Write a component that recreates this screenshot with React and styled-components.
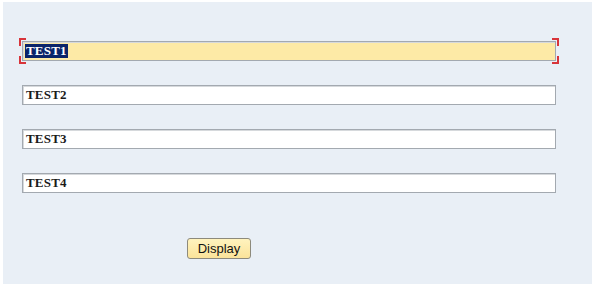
import React from 'react';
import styled, { createGlobalStyle } from 'styled-components';

const Global = createGlobalStyle`
  html, body {
    margin: 0;
    padding: 0;
    background: #ffffff;
  }
`;

const Page = styled.div`
  width: 595px;
  height: 288px;
  padding: 2px 3px 4px 3px;
  box-sizing: border-box;
  background: #ffffff;
`;

const Panel = styled.div`
  height: 100%;
  box-sizing: border-box;
  background: #e9eff6;
  padding: 39px 0 0 19px;
  display: flex;
  flex-direction: column;
`;

const Fields = styled.div`
  display: flex;
  flex-direction: column;
  gap: 24px;
`;

const FieldWrap = styled.div`
  position: relative;
  width: 534px;
`;

const Field = styled.div`
  height: 20px;
  box-sizing: border-box;
  border: 1px solid #a3a9b0;
  box-shadow: inset 1px 1px 0 #d6d9dc;
  background: ${(p) => (p.$focused ? '#fdeaa6' : '#ffffff')};
  display: flex;
  align-items: center;
  padding-left: 3px;
  font-family: "Liberation Serif", "DejaVu Serif", serif;
  font-weight: bold;
  font-size: 13px;
  letter-spacing: 0.2px;
  color: #1a1a1a;
`;

const Selected = styled.span`
  background: #0a246a;
  color: #ffffff;
  line-height: 14px;
  padding: 0 1px;
  margin-left: -1px;
`;

const Corner = styled.span`
  position: absolute;
  width: 5px;
  height: 6px;
  border-color: #d8343a;
  border-style: solid;
  border-width: 0;
  ${(p) => (p.$top ? 'top: -3px;' : 'bottom: -3px;')}
  ${(p) => (p.$left ? 'left: -3px;' : 'right: -3px;')}
  ${(p) => (p.$top ? 'border-top-width: 2px;' : 'border-bottom-width: 2px;')}
  ${(p) => (p.$left ? 'border-left-width: 2px;' : 'border-right-width: 2px;')}
`;

const ButtonRow = styled.div`
  margin-top: 45px;
  padding-left: 165px;
`;

const Button = styled.button`
  width: 64px;
  height: 21px;
  padding: 0;
  border: 1px solid #8d8a7c;
  border-radius: 3px;
  background: linear-gradient(#fff3be, #fbe39a);
  font-family: "Liberation Sans", Arial, sans-serif;
  font-size: 13px;
  color: #111111;
  cursor: pointer;
`;

const items = ['TEST1', 'TEST2', 'TEST3', 'TEST4'];

export default function App() {
  return (
    <Page>
      <Global />
      <Panel>
        <Fields>
          {items.map((t, i) => (
            <FieldWrap key={t}>
              <Field $focused={i === 0}>
                {i === 0 ? <Selected>{t}</Selected> : t}
              </Field>
              {i === 0 && (
                <>
                  <Corner $top $left />
                  <Corner $top />
                  <Corner $left />
                  <Corner />
                </>
              )}
            </FieldWrap>
          ))}
        </Fields>
        <ButtonRow>
          <Button>Display</Button>
        </ButtonRow>
      </Panel>
    </Page>
  );
}
